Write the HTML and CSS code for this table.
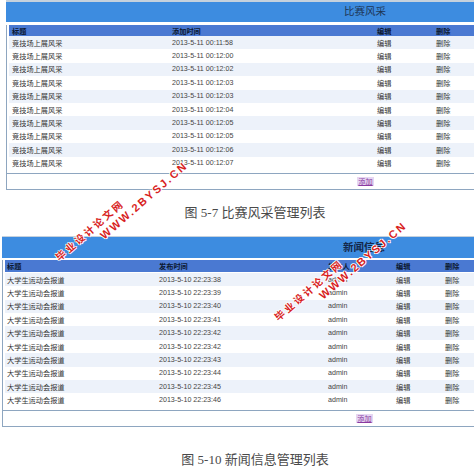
FILE: index.html
```html
<!DOCTYPE html>
<html lang="zh-CN">
<head>
<meta charset="utf-8">
<title>管理列表</title>
<link rel="stylesheet" href="styles.css">
</head>
<body>
<div class="page">
  <section class="panel panel-a">
    <div class="bar">比赛风采</div>
    <div class="body">
      <div class="grid grid-a">
        <div class="row head"><span>标题</span><span>添加时间</span><span>编辑</span><span>删除</span></div>
        <div class="row"><span>竞技场上展风采</span><span class="t">2013-5-11 00:11:58</span><span>编辑</span><span>删除</span></div>
        <div class="row"><span>竞技场上展风采</span><span class="t">2013-5-11 00:12:00</span><span>编辑</span><span>删除</span></div>
        <div class="row"><span>竞技场上展风采</span><span class="t">2013-5-11 00:12:02</span><span>编辑</span><span>删除</span></div>
        <div class="row"><span>竞技场上展风采</span><span class="t">2013-5-11 00:12:03</span><span>编辑</span><span>删除</span></div>
        <div class="row"><span>竞技场上展风采</span><span class="t">2013-5-11 00:12:03</span><span>编辑</span><span>删除</span></div>
        <div class="row"><span>竞技场上展风采</span><span class="t">2013-5-11 00:12:04</span><span>编辑</span><span>删除</span></div>
        <div class="row"><span>竞技场上展风采</span><span class="t">2013-5-11 00:12:05</span><span>编辑</span><span>删除</span></div>
        <div class="row"><span>竞技场上展风采</span><span class="t">2013-5-11 00:12:05</span><span>编辑</span><span>删除</span></div>
        <div class="row"><span>竞技场上展风采</span><span class="t">2013-5-11 00:12:06</span><span>编辑</span><span>删除</span></div>
        <div class="row"><span>竞技场上展风采</span><span class="t">2013-5-11 00:12:07</span><span>编辑</span><span>删除</span></div>
      </div>
      <div class="foot"><a class="add" href="#">添加</a></div>
    </div>
  </section>
  <p class="caption caption-a">图 5-7 比赛风采管理列表</p>

  <section class="panel panel-b">
    <div class="bar bar-b">新闻信息</div>
    <div class="body">
      <div class="grid grid-b">
        <div class="row head"><span>标题</span><span>发布时间</span><span>发布人</span><span>编辑</span><span>删除</span></div>
        <div class="row"><span>大学生运动会报道</span><span class="t">2013-5-10 22:23:38</span><span class="t">admin</span><span>编辑</span><span>删除</span></div>
        <div class="row"><span>大学生运动会报道</span><span class="t">2013-5-10 22:23:39</span><span class="t">admin</span><span>编辑</span><span>删除</span></div>
        <div class="row"><span>大学生运动会报道</span><span class="t">2013-5-10 22:23:40</span><span class="t">admin</span><span>编辑</span><span>删除</span></div>
        <div class="row"><span>大学生运动会报道</span><span class="t">2013-5-10 22:23:41</span><span class="t">admin</span><span>编辑</span><span>删除</span></div>
        <div class="row"><span>大学生运动会报道</span><span class="t">2013-5-10 22:23:42</span><span class="t">admin</span><span>编辑</span><span>删除</span></div>
        <div class="row"><span>大学生运动会报道</span><span class="t">2013-5-10 22:23:42</span><span class="t">admin</span><span>编辑</span><span>删除</span></div>
        <div class="row"><span>大学生运动会报道</span><span class="t">2013-5-10 22:23:43</span><span class="t">admin</span><span>编辑</span><span>删除</span></div>
        <div class="row"><span>大学生运动会报道</span><span class="t">2013-5-10 22:23:44</span><span class="t">admin</span><span>编辑</span><span>删除</span></div>
        <div class="row"><span>大学生运动会报道</span><span class="t">2013-5-10 22:23:45</span><span class="t">admin</span><span>编辑</span><span>删除</span></div>
        <div class="row"><span>大学生运动会报道</span><span class="t">2013-5-10 22:23:46</span><span class="t">admin</span><span>编辑</span><span>删除</span></div>
      </div>
      <div class="foot"><a class="add" href="#">添加</a></div>
    </div>
  </section>
  <p class="caption caption-b">图 5-10 新闻信息管理列表</p>

  <div class="wm wm-1"><div class="wm-cn">毕业设计论文网</div><div class="wm-en">WWW.2BYSJ.CN</div></div>
  <div class="wm wm-2"><div class="wm-cn">毕业设计论文网</div><div class="wm-en">WWW.2BYSJ.CN</div></div>
</div>
</body>
</html>
```

FILE: styles.css
```css
html, body {
  margin: 0;
  padding: 0;
  background: #ffffff;
  overflow: hidden;
}

.page {
  position: relative;
  width: 474px;
  height: 475px;
  overflow: hidden;
  font-family: "Liberation Sans", "Noto Sans CJK SC", sans-serif;
}

.panel {
  background: #ffffff;
}

.panel-a {
  margin-left: 6px;
  width: 718px;
  border-top: 2px solid #c5d1dd;
}

.panel-b {
  margin-left: 2px;
  width: 724px;
  margin-top: 15px;
  border-top: 1px solid #c5d1dd;
}

.bar {
  height: 20px;
  line-height: 18px;
  background: #3d8ce0;
  color: #1d3656;
  font-family: "Noto Sans CJK SC", sans-serif;
  font-size: 10.5px;
  text-align: center;
}

.bar-b {
  height: 21px;
  line-height: 20px;
  font-weight: bold;
  color: #14284a;
}

.body {
  border-left: 1px solid #8ea6c0;
  border-bottom: 1px solid #8ea6c0;
}

.grid {
  margin-left: 2px;
}

.grid-a {
  margin-top: 3px;
}

.grid-b {
  margin-top: 2px;
}

.row {
  display: grid;
  height: 13.4px;
  align-items: center;
  font-size: 7.2px;
  color: #333333;
  white-space: nowrap;
}

.grid-a .row {
  grid-template-columns: 160px 205px 59px 1fr;
}

.grid-b .row {
  grid-template-columns: 152px 169px 68px 49px 1fr;
}

.row span {
  padding-left: 3px;
  font-family: "Noto Sans CJK SC", sans-serif;
}

.grid-b .row span {
  padding-left: 2px;
}

.row span.t {
  font-family: "Liberation Sans", sans-serif;
  color: #454545;
  font-size: 7.1px;
}

.row:nth-child(even) {
  background: #edf2fa;
}

.row.head {
  height: 11px;
  background: #4a79d2;
  color: #0c1830;
  font-weight: bold;
}

.grid-b .row.head {
  height: 12px;
  margin-bottom: 1px;
}

.foot {
  margin-top: 3px;
  border-top: 1px solid #8ea6c0;
  height: 15px;
  display: flex;
  align-items: center;
  justify-content: center;
}

.add {
  font-family: "Noto Sans CJK SC", sans-serif;
  font-size: 7.2px;
  color: #8a3aa0;
  background: #e6d6f3;
  text-decoration: underline;
  line-height: 9px;
  padding: 0 1px;
}

.caption {
  margin: 0;
  padding-left: 36px;
  height: 16px;
  line-height: 16px;
  text-align: center;
  font-family: "Liberation Serif", "Noto Sans CJK SC", serif;
  font-size: 13px;
  font-weight: normal;
  color: #4a4a4a;
}

.caption-a {
  margin-top: 15px;
}

.caption-b {
  margin-top: 25px;
}

.wm {
  position: absolute;
  transform: rotate(-41deg);
  transform-origin: 0 0;
  color: #d81e1e;
  font-weight: bold;
  white-space: nowrap;
  text-shadow: 1px 0 #fff, -1px 0 #fff, 0 1px #fff, 0 -1px #fff;
  z-index: 2;
}

.wm-1 {
  left: 53px;
  top: 254px;
}

.wm-2 {
  left: 272px;
  top: 314px;
}

.wm-cn {
  font-family: "Noto Sans CJK SC", sans-serif;
  font-size: 10px;
  letter-spacing: 2.4px;
  line-height: 12px;
}

.wm-en {
  font-family: "Liberation Sans", sans-serif;
  font-size: 11px;
  letter-spacing: 2px;
  line-height: 12px;
  margin-left: 48px;
  margin-top: 1px;
}
```
